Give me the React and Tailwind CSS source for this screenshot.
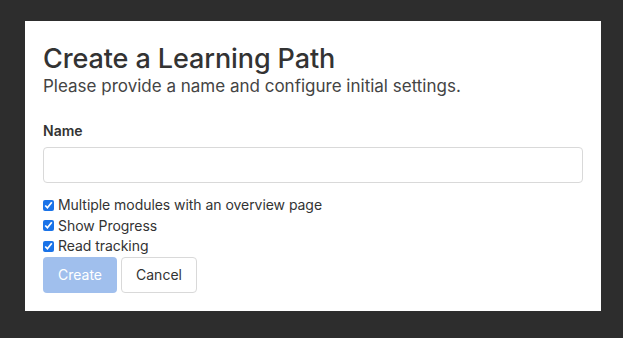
export default function App() {
  return (
    <div className="min-h-screen w-full bg-[#2d2d2d] pt-[21px] pl-[25px]" style={{ fontFamily: 'Inter, "Noto Sans", sans-serif' }}>
      <div className="w-[576px] h-[290px] bg-white px-[18px] pt-[21px] text-[#333]">
        <h1 className="text-[27px] leading-[33px] font-medium tracking-[-0.1px]">Create a Learning Path</h1>
        <p className="text-[17px] leading-[22px] text-[#444]">Please provide a name and configure initial settings.</p>

        <form className="mt-[23px]" onSubmit={(e) => e.preventDefault()}>
          <label className="block text-[14px] leading-[22px] font-semibold">Name</label>
          <input type="text" className="mt-[5px] block h-[36px] w-[540px] rounded-[4px] border border-[#d9d9d9] px-3 text-[14px] outline-none" />

          <div className="mt-[12px] flex flex-col text-[14px] leading-[20.5px] text-[#333]">
            {['Multiple modules with an overview page', 'Show Progress', 'Read tracking'].map((label) => (
              <label key={label} className="flex items-center gap-[4px]">
                <input type="checkbox" defaultChecked className="m-0 h-[11px] w-[11px] accent-[#1a73e8]" />
                <span className="tracking-[-0.05px]">{label}</span>
              </label>
            ))}
          </div>

          <div className="mt-0 flex gap-[4px]">
            <button type="button" disabled className="h-[36px] w-[74px] rounded-[4px] bg-[#a0bfed] text-[14px] text-white">Create</button>
            <button type="button" className="h-[36px] w-[76px] rounded-[4px] border border-[#d9d9d9] bg-white text-[14px] text-[#333]">Cancel</button>
          </div>
        </form>
      </div>
    </div>
  );
}
